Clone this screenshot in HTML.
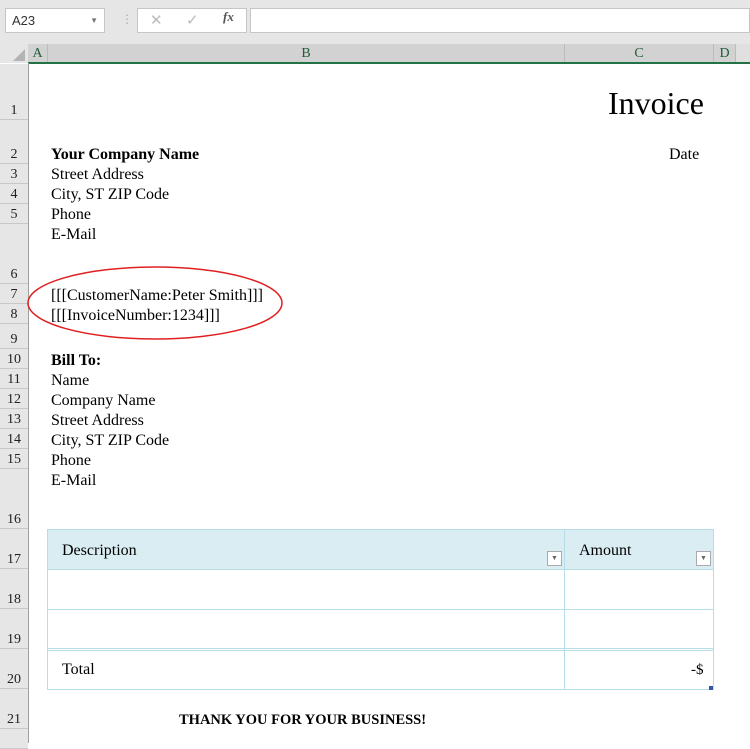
<!DOCTYPE html>
<html><head><style>
body{margin:0;width:750px;height:738px;overflow:hidden;background:#fff;font-family:"Liberation Serif",serif;position:relative}
.a{position:absolute;white-space:nowrap}
.t{font-size:16px;color:#000}
.rh{position:absolute;left:0;width:28px;background:#e6e6e6;border-bottom:1px solid #c8c8c8;box-sizing:border-box;font-size:14px;text-align:center;line-height:1;display:flex;align-items:flex-end;justify-content:center;padding-bottom:1px;color:#222}
</style></head><body>
<div class="a" style="left:0;top:0;width:750px;height:44px;background:#e6e6e6"></div>
<div class="a" style="left:5px;top:8px;width:100px;height:25px;background:#fff;border:1px solid #c6c6c6;box-sizing:border-box;font:13px 'Liberation Sans',sans-serif;line-height:23px;padding-left:6px;color:#333">A23<span style="position:absolute;right:6px;top:0;font-size:8px;color:#777">▼</span></div>
<div class="a" style="left:121px;top:12px;color:#aaa;font:12px sans-serif">⋮</div>
<div class="a" style="left:137px;top:8px;width:110px;height:25px;background:#fff;border:1px solid #c6c6c6;box-sizing:border-box;color:#bbb;font:15px 'Liberation Sans',sans-serif;line-height:23px"><span style="position:absolute;left:12px">✕</span><span style="position:absolute;left:48px">✓</span><span style="position:absolute;left:85px;color:#555;font:italic bold 13px 'Liberation Serif',serif">fx</span></div>
<div class="a" style="left:250px;top:8px;width:500px;height:25px;background:#fff;border:1px solid #c6c6c6;box-sizing:border-box"></div>
<div class="a" style="left:0;top:44px;width:750px;height:19px;background:#e0e0e0"></div>
<div class="a" style="left:0;top:44px;width:28px;height:19px;background:#e6e6e6"></div>
<div class="a" style="left:13px;top:49px;width:0;height:0;border-left:12px solid transparent;border-bottom:12px solid #b4b4b4"></div>
<div class="a" style="left:28px;top:44px;width:20px;height:19px;background:#d2d2d2;border-right:1px solid #bbb;box-sizing:border-box;text-align:center;font-size:14px;line-height:20px;color:#1e5c3a">A</div>
<div class="a" style="left:48px;top:44px;width:517px;height:19px;background:#d2d2d2;border-right:1px solid #bbb;box-sizing:border-box;text-align:center;font-size:14px;line-height:20px;color:#1e5c3a">B</div>
<div class="a" style="left:565px;top:44px;width:149px;height:19px;background:#d2d2d2;border-right:1px solid #bbb;box-sizing:border-box;text-align:center;font-size:14px;line-height:20px;color:#1e5c3a">C</div>
<div class="a" style="left:714px;top:44px;width:22px;height:19px;background:#d2d2d2;border-right:1px solid #bbb;box-sizing:border-box;text-align:center;font-size:14px;line-height:20px;color:#1e5c3a">D</div>
<div class="a" style="left:28px;top:62px;width:722px;height:2px;background:#217346"></div>
<div class="a" style="left:28px;top:63px;width:1px;height:680px;background:#9e9e9e"></div>
<div class="rh" style="top:64px;height:56px">1</div>
<div class="rh" style="top:120px;height:44px">2</div>
<div class="rh" style="top:164px;height:20px">3</div>
<div class="rh" style="top:184px;height:20px">4</div>
<div class="rh" style="top:204px;height:20px">5</div>
<div class="rh" style="top:224px;height:60px">6</div>
<div class="rh" style="top:284px;height:20px">7</div>
<div class="rh" style="top:304px;height:20px">8</div>
<div class="rh" style="top:324px;height:25px">9</div>
<div class="rh" style="top:349px;height:20px">10</div>
<div class="rh" style="top:369px;height:20px">11</div>
<div class="rh" style="top:389px;height:20px">12</div>
<div class="rh" style="top:409px;height:20px">13</div>
<div class="rh" style="top:429px;height:20px">14</div>
<div class="rh" style="top:449px;height:20px">15</div>
<div class="rh" style="top:469px;height:60px">16</div>
<div class="rh" style="top:529px;height:40px">17</div>
<div class="rh" style="top:569px;height:40px">18</div>
<div class="rh" style="top:609px;height:40px">19</div>
<div class="rh" style="top:649px;height:40px">20</div>
<div class="rh" style="top:689px;height:40px">21</div>
<div class="rh" style="top:729px;height:20px"></div>
<div class="a" style="left:608px;top:85px;font-size:32px">Invoice</div>
<div class="a t" style="left:51px;top:146px;font-weight:bold">Your Company Name</div>
<div class="a t" style="left:669px;top:146px">Date</div>
<div class="a t" style="left:51px;top:166px">Street Address</div>
<div class="a t" style="left:51px;top:186px">City, ST ZIP Code</div>
<div class="a t" style="left:51px;top:206px">Phone</div>
<div class="a t" style="left:51px;top:226px">E-Mail</div>
<div class="a t" style="left:51px;top:287px">[[[CustomerName:Peter Smith]]]</div>
<div class="a t" style="left:51px;top:307px">[[[InvoiceNumber:1234]]]</div>
<svg class="a" style="left:0;top:0" width="750" height="738"><ellipse cx="155" cy="303" rx="127" ry="36" fill="none" stroke="#e02020" stroke-width="1.5"/></svg>
<div class="a t" style="left:51px;top:352px;font-weight:bold">Bill To:</div>
<div class="a t" style="left:51px;top:372px">Name</div>
<div class="a t" style="left:51px;top:392px">Company Name</div>
<div class="a t" style="left:51px;top:412px">Street Address</div>
<div class="a t" style="left:51px;top:432px">City, ST ZIP Code</div>
<div class="a t" style="left:51px;top:452px">Phone</div>
<div class="a t" style="left:51px;top:472px">E-Mail</div>
<div class="a" style="left:47px;top:529px;width:667px;height:161px;border:1px solid #b7dde8;box-sizing:border-box"></div>
<div class="a" style="left:48px;top:530px;width:665px;height:39px;background:#daedf3;border-bottom:1px solid #b7dde8"></div>
<div class="a" style="left:564px;top:529px;width:1px;height:161px;background:#b7dde8"></div>
<div class="a" style="left:48px;top:609px;width:665px;height:1px;background:#b7dde8"></div>
<div class="a" style="left:48px;top:648px;width:665px;height:1px;background:#b7dde8"></div>
<div class="a" style="left:48px;top:650px;width:665px;height:1px;background:#b7dde8"></div>
<div class="a t" style="left:62px;top:542px">Description</div>
<div class="a t" style="left:579px;top:542px">Amount</div>
<div class="a" style="left:547px;top:551px;width:15px;height:15px;border:1px solid #aaa;box-sizing:border-box;background:#fff;font-size:7px;text-align:center;line-height:13px;color:#666">▼</div>
<div class="a" style="left:696px;top:551px;width:15px;height:15px;border:1px solid #aaa;box-sizing:border-box;background:#fff;font-size:7px;text-align:center;line-height:13px;color:#666">▼</div>
<div class="a t" style="left:62px;top:661px">Total</div>
<div class="a t" style="left:691px;top:662px;font-size:15px">-$</div>
<div class="a" style="left:709px;top:686px;width:4px;height:4px;background:#3355aa"></div>
<div class="a" style="left:179px;top:712px;font-size:14.5px;font-weight:bold">THANK YOU FOR YOUR BUSINESS!</div>
</body></html>
